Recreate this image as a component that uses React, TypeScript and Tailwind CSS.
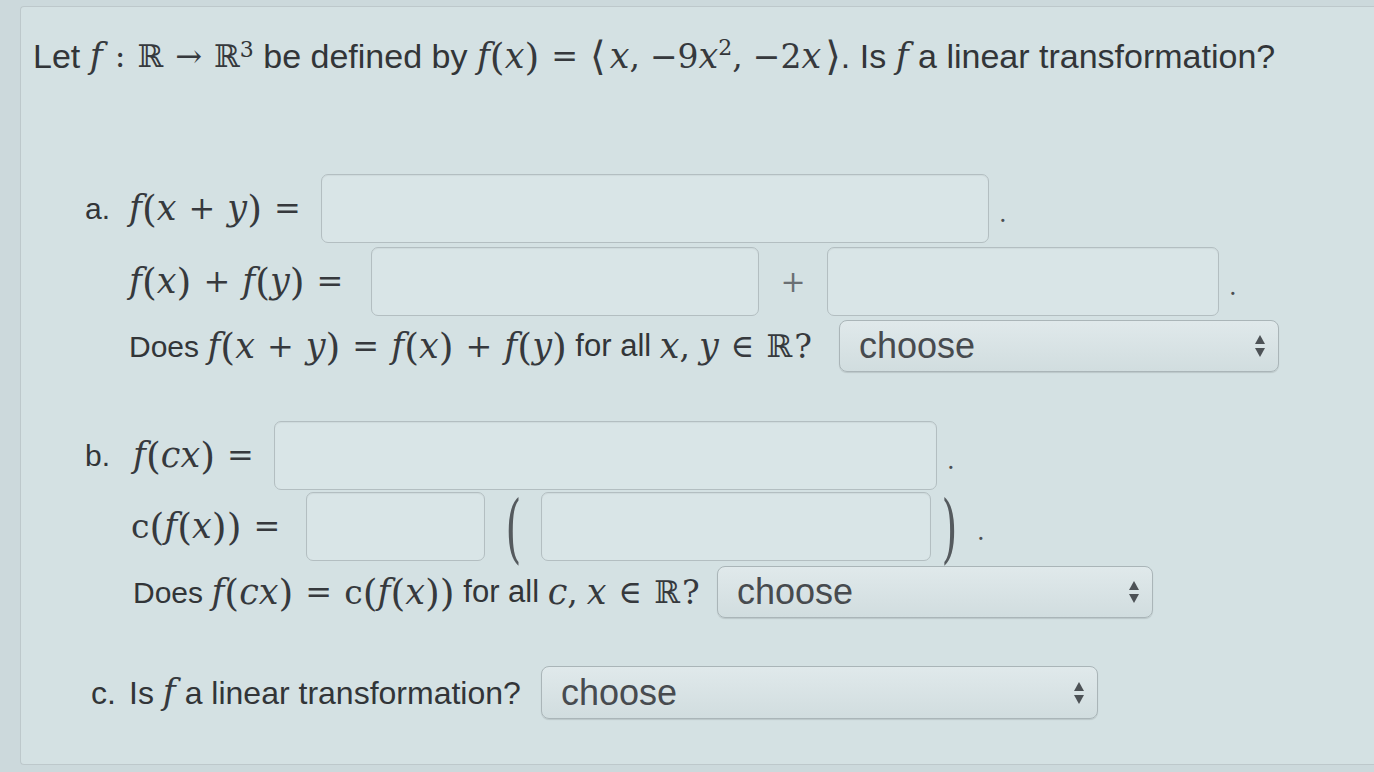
import React from "react";

const sans = "font-['Liberation_Sans',Arial,sans-serif]";
const serif = "font-['DejaVu_Serif',serif]";

function V({ c }: { c: string }) {
  return <i className={`${serif} italic text-[35px] leading-none text-[#36393d]`}>{c}</i>;
}
function P({ c }: { c: string }) {
  return <span className={`${serif} text-[38px] leading-none text-[#36393d] relative top-[1px]`}>{c}</span>;
}
function Op({ c }: { c: string }) {
  return <span className={`${serif} text-[32px] leading-none mx-[12px] text-[#36393d]`}>{c}</span>;
}
function Ch({ c, cls = "" }: { c: string; cls?: string }) {
  return <span className={`${serif} text-[33px] leading-none text-[#36393d] ${cls}`}>{c}</span>;
}
function RR() {
  return <span className={`${serif} text-[31px] leading-none text-[#36393d]`}>ℝ</span>;
}

function Box({ w, h = "h-[69px]" }: { w: string; h?: string }) {
  return (
    <div
      className={`${w} ${h} shrink-0 rounded-[7px] border-[1.5px] border-[#b3bec1] bg-[#d9e5e7] shadow-[inset_0_1px_1px_rgba(0,0,0,0.05)]`}
    />
  );
}

function Select({ w, h = "h-[52px]" }: { w: string; h?: string }) {
  return (
    <div
      className={`${w} ${h} shrink-0 rounded-[8px] border-[1.5px] border-[#aab5b8] bg-gradient-to-b from-[#e0e9eb] to-[#d1dddf] shadow-[0_1px_1px_rgba(0,0,0,0.12)] flex items-center justify-between pl-[19px] pr-[12px]`}
    >
      <span className={`${sans} text-[36px] text-[#474b4f] leading-none`}>choose</span>
      <svg width="12" height="26" viewBox="0 0 12 26">
        <polygon points="6,2 11,11 1,11" fill="#4d5256" />
        <polygon points="1,15 11,15 6,24" fill="#4d5256" />
      </svg>
    </div>
  );
}

function Dot() {
  return <span className={`${serif} text-[24px] text-[#4a4e52] ml-[10px] relative top-[6px]`}>.</span>;
}

function BigParen({ c }: { c: string }) {
  return (
    <span className={`${serif} text-[74px] leading-none text-[#555a5e] relative top-[2px] scale-x-[0.55] inline-block`}>{c}</span>
  );
}

export default function App() {
  return (
    <div className={`min-h-screen w-full bg-[#ccd9dc] pt-[6px] pl-[20px] overflow-hidden ${sans} text-[#323538]`}>
      <div className="h-[759px] rounded-tl-[4px] rounded-bl-[4px] border-l-[1.5px] border-t-[1.5px] border-b-[1.5px] border-[#bdc8cb] bg-[#d4e1e3] pt-[24px] pl-[12px]">
        {/* Title */}
        <div className="h-[50px] flex items-center text-[34px] whitespace-nowrap">
          <span>Let&nbsp;</span>
          <V c="f" />
          <Op c=":" />
          <RR />
          <Op c="→" />
          <RR />
          <sup className={`${serif} text-[22px] relative -top-[6px]`}>3</sup>
          <span>&nbsp;be defined by&nbsp;</span>
          <V c="f" />
          <P c="(" />
          <V c="x" />
          <P c=")" />
          <Op c="=" />
          <Ch c="⟨" cls="text-[40px] mr-[4px]" />
          <V c="x" />
          <Ch c="," cls="mr-[10px]" />
          <Ch c="−9" />
          <V c="x" />
          <sup className={`${serif} text-[22px] relative -top-[8px]`}>2</sup>
          <Ch c="," cls="mr-[10px]" />
          <Ch c="−2" />
          <V c="x" />
          <Ch c="⟩" cls="text-[40px] ml-[4px]" />
          <span>.&nbsp;Is&nbsp;</span>
          <V c="f" />
          <span>&nbsp;a linear transformation?</span>
        </div>

        {/* Part a */}
        <div className="mt-[92px] pl-[52px] text-[30px] whitespace-nowrap">
          <div className="h-[70px] flex items-center">
            <span className="w-[44px] shrink-0">a.</span>
            <div className="w-[192px] shrink-0 flex items-center">
              <V c="f" />
              <P c="(" />
              <V c="x" />
              <Op c="+" />
              <V c="y" />
              <P c=")" />
              <Op c="=" />
            </div>
            <Box w="w-[668px]" />
            <Dot />
          </div>
          <div className="mt-[3px] h-[70px] flex items-center pl-[44px]">
            <div className="w-[242px] shrink-0 flex items-center">
              <V c="f" />
              <P c="(" />
              <V c="x" />
              <P c=")" />
              <Op c="+" />
              <V c="f" />
              <P c="(" />
              <V c="y" />
              <P c=")" />
              <Op c="=" />
            </div>
            <Box w="w-[388px]" />
            <span className={`${serif} text-[30px] text-[#6a6f73] w-[68px] text-center shrink-0`}>+</span>
            <Box w="w-[392px]" />
            <Dot />
          </div>
          <div className="mt-[4px] h-[52px] flex items-center pl-[44px]">
            <div className="w-[710px] shrink-0 flex items-center">
              <span>Does&nbsp;</span>
              <V c="f" />
              <P c="(" />
              <V c="x" />
              <Op c="+" />
              <V c="y" />
              <P c=")" />
              <Op c="=" />
              <V c="f" />
              <P c="(" />
              <V c="x" />
              <P c=")" />
              <Op c="+" />
              <V c="f" />
              <P c="(" />
              <V c="y" />
              <P c=")" />
              <span className="text-[31px]">&nbsp;for all&nbsp;</span>
              <V c="x" />
              <Ch c="," cls="mr-[9px]" />
              <V c="y" />
              <Op c="∈" />
              <RR />
              <Ch c="?" cls="text-[31px] ml-[2px]" />
            </div>
            <Select w="w-[440px]" />
          </div>
        </div>

        {/* Part b */}
        <div className="mt-[48px] pl-[52px] text-[30px] whitespace-nowrap">
          <div className="h-[70px] flex items-center">
            <span className="w-[48px] shrink-0">b.</span>
            <div className="w-[141px] shrink-0 flex items-center">
              <V c="f" />
              <P c="(" />
              <V c="c" />
              <V c="x" />
              <P c=")" />
              <Op c="=" />
            </div>
            <Box w="w-[663px]" />
            <Dot />
          </div>
          <div className="mt-[1px] h-[70px] flex items-center pl-[46px]">
            <div className="w-[175px] shrink-0 flex items-center">
              <Ch c="c" />
              <P c="(" />
              <V c="f" />
              <P c="(" />
              <V c="x" />
              <P c=")" />
              <P c=")" />
              <Op c="=" />
            </div>
            <Box w="w-[179px]" />
            <div className="w-[56px] shrink-0 flex justify-center">
              <BigParen c="(" />
            </div>
            <Box w="w-[390px]" />
            <div className="w-[36px] shrink-0 flex justify-center">
              <BigParen c=")" />
            </div>
            <Dot />
          </div>
          <div className="mt-[5px] h-[52px] flex items-center pl-[48px]">
            <div className="w-[584px] shrink-0 flex items-center">
              <span>Does&nbsp;</span>
              <V c="f" />
              <P c="(" />
              <V c="c" />
              <V c="x" />
              <P c=")" />
              <Op c="=" />
              <Ch c="c" />
              <P c="(" />
              <V c="f" />
              <P c="(" />
              <V c="x" />
              <P c=")" />
              <P c=")" />
              <span className="text-[31px]">&nbsp;for all&nbsp;</span>
              <V c="c" />
              <Ch c="," cls="mr-[9px]" />
              <V c="x" />
              <Op c="∈" />
              <RR />
              <Ch c="?" cls="text-[31px] ml-[2px]" />
            </div>
            <Select w="w-[436px]" />
          </div>
        </div>

        {/* Part c */}
        <div className="mt-[48px] pl-[58px] text-[32px] whitespace-nowrap">
          <div className="h-[53px] flex items-center">
            <span className="w-[38px] shrink-0">c.</span>
            <div className="w-[412px] shrink-0 flex items-center">
              <span>Is&nbsp;</span>
              <V c="f" />
              <span>&nbsp;a linear transformation?</span>
            </div>
            <Select w="w-[557px]" h="h-[53px]" />
          </div>
        </div>
      </div>
    </div>
  );
}
